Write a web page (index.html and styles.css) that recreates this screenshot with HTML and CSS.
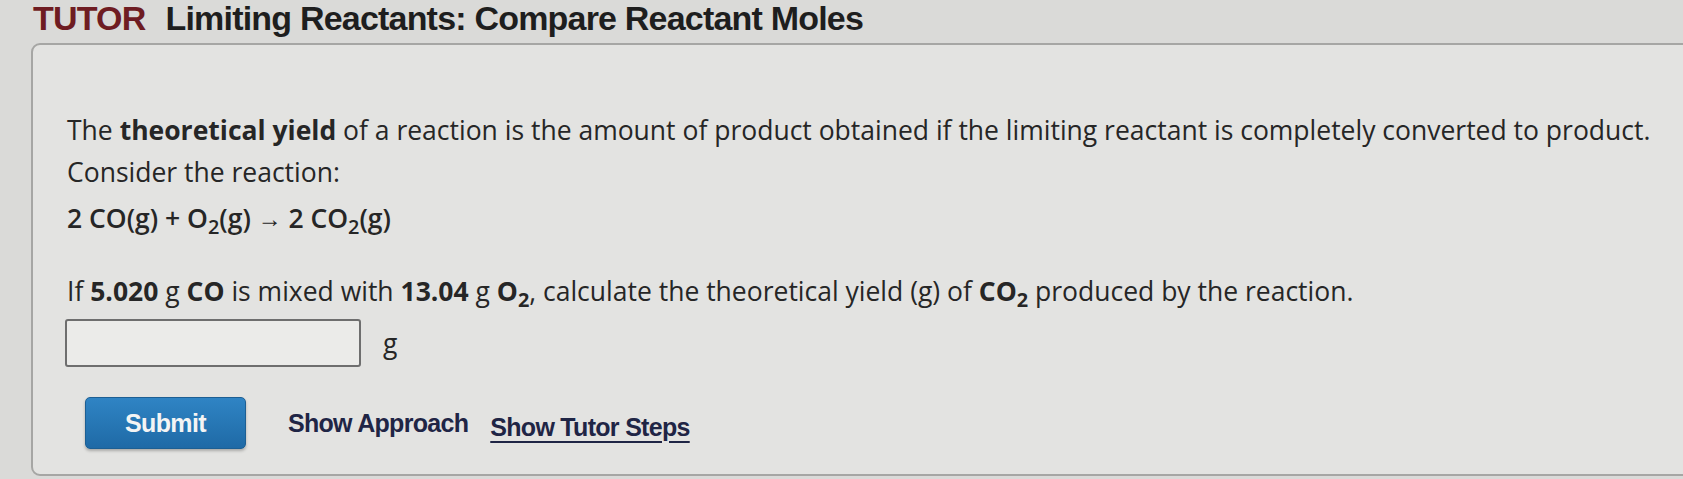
FILE: index.html
```html
<!DOCTYPE html>
<html lang="en">
<head>
<meta charset="utf-8">
<title>Limiting Reactants: Compare Reactant Moles</title>
<link rel="stylesheet" href="styles.css">
</head>
<body>
<header class="title">
  <span class="tag">TUTOR</span>
  <span class="heading">Limiting Reactants: Compare Reactant Moles</span>
</header>
<section class="card">
  <p class="intro">The <b>theoretical yield</b> of a reaction is the amount of product obtained if the limiting reactant is completely converted to product.</p>
  <p class="consider">Consider the reaction:</p>
  <p class="equation">2 CO(g) + O<sub>2</sub>(g) <span class="arrow">→</span> 2 CO<sub>2</sub>(g)</p>
  <p class="question">If <b>5.020</b> g <b>CO</b> is mixed with <b>13.04</b> g <b>O<sub>2</sub></b>, calculate the theoretical yield (g) of <b>CO<sub>2</sub></b> produced by the reaction.</p>
  <div class="answer">
    <input class="field" type="text" aria-label="answer">
    <span class="unit">g</span>
  </div>
  <div class="actions">
    <button class="submit" type="button">Submit</button>
    <a class="link approach" href="#">Show Approach</a>
    <a class="link steps" href="#">Show Tutor Steps</a>
  </div>
</section>
</body>
</html>
```
FILE: styles.css
```css
html, body {
  margin: 0;
  padding: 0;
}
body {
  background: #dadad8;
  width: 1683px;
  height: 479px;
  overflow: hidden;
  font-family: "Open Sans", "Liberation Sans", sans-serif;
  color: #262626;
}
.title {
  display: flex;
  align-items: baseline;
  gap: 20px;
  padding-left: 33px;
  height: 36px;
  font-family: "Liberation Sans", Arial, sans-serif;
  font-weight: bold;
  font-size: 34px;
  letter-spacing: -0.8px;
  line-height: 36px;
}
.tag {
  color: #6e1c22;
}
.heading {
  color: #1e1e1e;
}
.card {
  margin-top: 7px;
  margin-left: 31px;
  margin-right: -30px;
  height: 433px;
  box-sizing: border-box;
  border: 2px solid #a6a6a4;
  border-radius: 9px;
  background: #e3e3e1;
  padding: 69px 0 0 34px;
}
.card p {
  margin: 0;
  font-size: 26.5px;
  line-height: 32px;
}
.consider {
  margin-top: 10px !important;
}
.equation {
  margin-top: 14px !important;
  font-weight: 600;
}
.arrow {
  font-weight: 400;
  font-size: 0.9em;
  vertical-align: 0.05em;
}
sub {
  font-size: 0.75em;
  line-height: 0;
  vertical-align: -0.3em;
}
.question {
  margin-top: 41px !important;
}
.question b {
  font-weight: 700;
}
.answer {
  display: flex;
  align-items: center;
  gap: 22px;
  margin-top: 12px;
  margin-left: -2px;
}
.field {
  width: 296px;
  height: 48px;
  box-sizing: border-box;
  border: 2px solid #6e6e6e;
  border-radius: 3px;
  background: #ebebe9;
  margin: 0;
}
.unit {
  font-size: 26.5px;
}
.actions {
  display: flex;
  align-items: center;
  margin-top: 30px;
  margin-left: 18px;
  font-family: "Liberation Sans", Arial, sans-serif;
  font-weight: bold;
}
.submit {
  width: 161px;
  height: 52px;
  border: 1px solid #1d5f93;
  border-radius: 5px;
  background: linear-gradient(#2f84c4, #1f6aa6);
  color: #f4f4f4;
  font-family: "Liberation Sans", Arial, sans-serif;
  font-weight: bold;
  font-size: 25px;
  letter-spacing: -0.6px;
  box-shadow: 0 2px 3px rgba(0,0,0,0.25);
}
.link {
  color: #1f2545;
  text-decoration: none;
  font-size: 25px;
  letter-spacing: -0.7px;
}
.approach {
  margin-left: 42px;
}
.steps {
  margin-left: 22px;
  margin-top: 8px;
  text-decoration: underline;
  text-underline-offset: 5px;
  text-decoration-thickness: 2px;
}
```
